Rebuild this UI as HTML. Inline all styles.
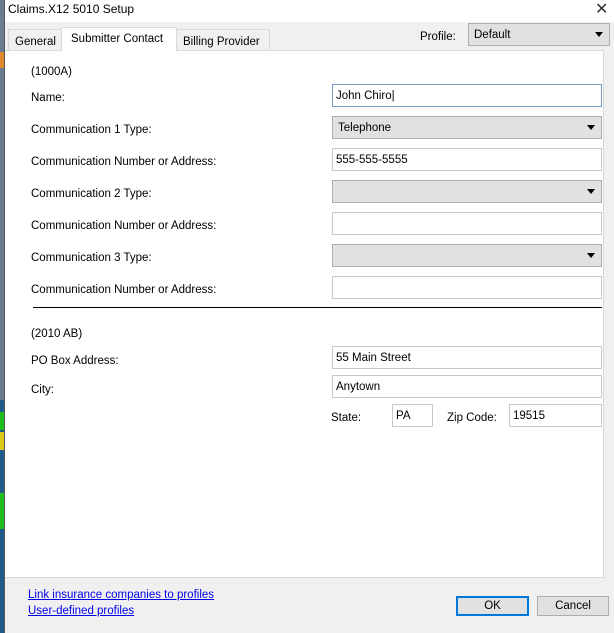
<!DOCTYPE html>
<html><head><style>
*{box-sizing:border-box;margin:0;padding:0}
body{width:614px;height:633px;overflow:hidden;background:#f0f0f0;font-family:"Liberation Sans",sans-serif;font-size:11.5px;color:#000;position:relative}
.a{position:absolute;white-space:nowrap}
.lbl{position:absolute;left:31px;white-space:nowrap;margin-top:2px}
.in{position:absolute;left:332px;width:270px;height:23px;background:#fff;border:1px solid #c8c8c8;padding:5px 3px;white-space:nowrap}
.cb{position:absolute;left:332px;width:270px;height:23px;background:#e1e1e1;border:1px solid #adadad;padding:5px 5px;white-space:nowrap}
.cb:after{content:"";position:absolute;right:6px;top:8px;border-left:4px solid transparent;border-right:4px solid transparent;border-top:5px solid #000}
.btn{position:absolute;top:596px;height:20px;background:#e1e1e1;border:1px solid #adadad;text-align:center;line-height:18px}
a{color:#0000ee;text-decoration:underline}
.tab{position:absolute;white-space:nowrap;font-size:11.5px}
</style></head><body>
<div class="a" style="left:0;top:0;width:4px;height:633px;background:#1e5a8a"></div>
<div class="a" style="left:0;top:0;width:4px;height:400px;background:#6a7d90"></div>
<div class="a" style="left:0;top:52px;width:4px;height:16px;background:#e08a30"></div>
<div class="a" style="left:0;top:412px;width:4px;height:18px;background:#1cbf1c"></div>
<div class="a" style="left:0;top:432px;width:4px;height:18px;background:#d8c818"></div>
<div class="a" style="left:0;top:493px;width:4px;height:36px;background:#1cbf1c"></div>
<div class="a" style="left:4px;top:0;width:1px;height:633px;background:#555"></div>
<div class="a" style="left:5px;top:0;width:609px;height:22px;background:#fff"></div>
<div class="a" style="left:8px;top:2px;font-size:12px">Claims.X12 5010 Setup</div>
<div class="a" style="left:595px;top:-1px;font-size:16px;color:#333">✕</div>
<div class="a" style="left:5px;top:50px;width:599px;height:528px;background:#fff;border:1px solid #d9d9d9;border-left:none"></div>
<div class="tab" style="left:8px;top:29px;width:54px;height:22px;background:#f0f0f0;border:1px solid #d9d9d9;padding:6px 6px">General</div>
<div class="tab" style="left:61px;top:27px;width:116px;height:24px;background:#fff;border:1px solid #d9d9d9;border-bottom:none;padding:5px 9px">Submitter Contact</div>
<div class="tab" style="left:176px;top:29px;width:94px;height:22px;background:#f0f0f0;border:1px solid #d9d9d9;padding:6px 6px">Billing Provider</div>
<div class="a" style="left:420px;top:31px">Profile:</div>
<div class="cb" style="left:468px;top:23px;width:142px;padding-top:5px">Default</div>
<div class="lbl" style="top:64px">(1000A)</div>
<div class="lbl" style="top:90px">Name:</div>
<div class="in" style="top:84px;border-color:#7a9cc8">John Chiro|</div>
<div class="lbl" style="top:122px">Communication 1 Type:</div>
<div class="cb" style="top:116px">Telephone</div>
<div class="lbl" style="top:154px">Communication Number or Address:</div>
<div class="in" style="top:148px">555-555-5555</div>
<div class="lbl" style="top:186px">Communication 2 Type:</div>
<div class="cb" style="top:180px"></div>
<div class="lbl" style="top:218px">Communication Number or Address:</div>
<div class="in" style="top:212px"></div>
<div class="lbl" style="top:250px">Communication 3 Type:</div>
<div class="cb" style="top:244px"></div>
<div class="lbl" style="top:282px">Communication Number or Address:</div>
<div class="in" style="top:276px"></div>
<div class="a" style="left:33px;top:307px;width:569px;height:1px;background:#000"></div>
<div class="lbl" style="top:326px">(2010 AB)</div>
<div class="lbl" style="top:353px">PO Box Address:</div>
<div class="in" style="top:346px">55 Main Street</div>
<div class="lbl" style="top:382px">City:</div>
<div class="in" style="top:375px">Anytown</div>
<div class="a" style="left:331px;top:412px">State:</div>
<div class="in" style="left:392px;top:404px;width:41px">PA</div>
<div class="a" style="left:447px;top:412px">Zip Code:</div>
<div class="in" style="left:509px;top:404px;width:93px">19515</div>
<div class="a" style="left:28px;top:589px"><a>Link insurance companies to profiles</a></div>
<div class="a" style="left:28px;top:605px"><a>User-defined profiles</a></div>
<div class="btn" style="left:456px;width:73px;border:2px solid #0078d7;line-height:16px">OK</div>
<div class="btn" style="left:537px;width:72px">Cancel</div>
</body></html>
